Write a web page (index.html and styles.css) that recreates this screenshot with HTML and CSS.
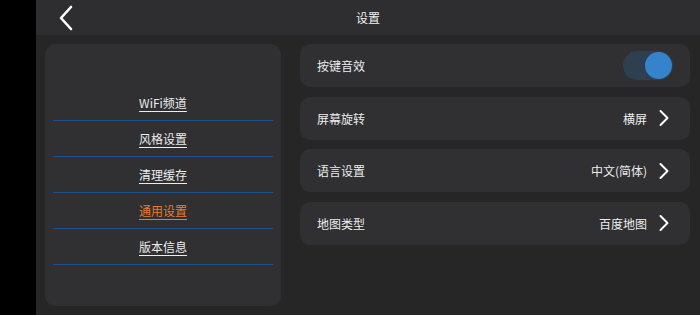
FILE: index.html
```html
<!DOCTYPE html>
<html lang="zh-CN">
<head>
    <meta charset="UTF-8">
    <meta name="viewport" content="width=device-width, initial-scale=1.0">
    <title>设置</title>
    <link rel="stylesheet" href="styles.css">
</head>
<body>

    <div class="side-strip"></div>

    <div class="app">
        <header class="topbar">
            <button class="back-btn" aria-label="返回">
                <svg width="16" height="26" viewBox="0 0 16 26">
                    <path d="M13 2 L3 13 L13 24" fill="none" stroke="#fff" stroke-width="2.6" stroke-linecap="round" stroke-linejoin="round"/>
                </svg>
            </button>
            <div class="title">设置</div>
        </header>

        <main class="content">
            <nav class="menu">
                <a class="menu-item">WiFi频道</a>
                <a class="menu-item">风格设置</a>
                <a class="menu-item">清理缓存</a>
                <a class="menu-item active">通用设置</a>
                <a class="menu-item">版本信息</a>
            </nav>

            <section class="settings">
                <div class="row">
                    <span class="row-label">按键音效</span>
                    <div class="toggle on"><span class="knob"></span></div>
                </div>
                <div class="row">
                    <span class="row-label">屏幕旋转</span>
                    <span class="row-value">横屏</span>
                    <svg class="chevron" width="12" height="18" viewBox="0 0 12 18">
                        <path d="M2.5 2 L9.5 9 L2.5 16" fill="none" stroke="#fff" stroke-width="2" stroke-linecap="round" stroke-linejoin="round"/>
                    </svg>
                </div>
                <div class="row">
                    <span class="row-label">语言设置</span>
                    <span class="row-value">中文(简体)</span>
                    <svg class="chevron" width="12" height="18" viewBox="0 0 12 18">
                        <path d="M2.5 2 L9.5 9 L2.5 16" fill="none" stroke="#fff" stroke-width="2" stroke-linecap="round" stroke-linejoin="round"/>
                    </svg>
                </div>
                <div class="row">
                    <span class="row-label">地图类型</span>
                    <span class="row-value">百度地图</span>
                    <svg class="chevron" width="12" height="18" viewBox="0 0 12 18">
                        <path d="M2.5 2 L9.5 9 L2.5 16" fill="none" stroke="#fff" stroke-width="2" stroke-linecap="round" stroke-linejoin="round"/>
                    </svg>
                </div>
            </section>
        </main>
    </div>

</body>
</html>
```

FILE: styles.css
```css
* {
    margin: 0;
    padding: 0;
    box-sizing: border-box;
}

body {
    font-family: 'Noto Sans CJK SC', 'Noto Sans', sans-serif;
    background-color: #000;
    color: #e8e8e8;
    width: 700px;
    height: 315px;
    display: flex;
    overflow: hidden;
}

.side-strip {
    width: 36px;
    flex-shrink: 0;
    background-color: #000;
}

.app {
    flex: 1;
    display: flex;
    flex-direction: column;
    background-color: #262627;
}

.topbar {
    height: 35px;
    background-color: #2e2e30;
    display: flex;
    align-items: center;
    position: relative;
}

.back-btn {
    background: none;
    border: none;
    margin-left: 22px;
    display: flex;
    align-items: center;
    cursor: pointer;
}

.title {
    position: absolute;
    left: 0;
    right: 0;
    text-align: center;
    font-size: 12px;
    color: #f0f0f0;
    pointer-events: none;
}

.content {
    flex: 1;
    display: flex;
    gap: 19px;
    padding: 9px 10px 9px 9px;
}

.menu {
    width: 236px;
    background-color: #303032;
    border-radius: 10px;
    padding: 41px 8px 0;
    display: flex;
    flex-direction: column;
}

.menu-item {
    height: 36px;
    display: flex;
    align-items: center;
    justify-content: center;
    border-bottom: 1.5px solid #1d4f8c;
    font-size: 12px;
    color: #ececec;
    text-decoration: underline;
    text-underline-offset: 3px;
    cursor: pointer;
}

.menu-item.active {
    color: #e87c2c;
}

.settings {
    flex: 1;
    display: flex;
    flex-direction: column;
    gap: 9.5px;
}

.row {
    height: 43px;
    background-color: #303032;
    border-radius: 10px;
    display: flex;
    align-items: center;
    padding: 0 20px 0 17px;
    font-size: 12px;
}

.row-label {
    flex: 1;
    color: #ececec;
}

.row-value {
    color: #ececec;
    margin-right: 11px;
}

.chevron {
    display: block;
}

.toggle {
    width: 50px;
    height: 29px;
    border-radius: 15px;
    background-color: #2e3f50;
    position: relative;
    margin-right: -3px;
}

.toggle .knob {
    position: absolute;
    top: 1px;
    right: 1px;
    width: 27px;
    height: 27px;
    border-radius: 50%;
    background-color: #3583cc;
}
```
